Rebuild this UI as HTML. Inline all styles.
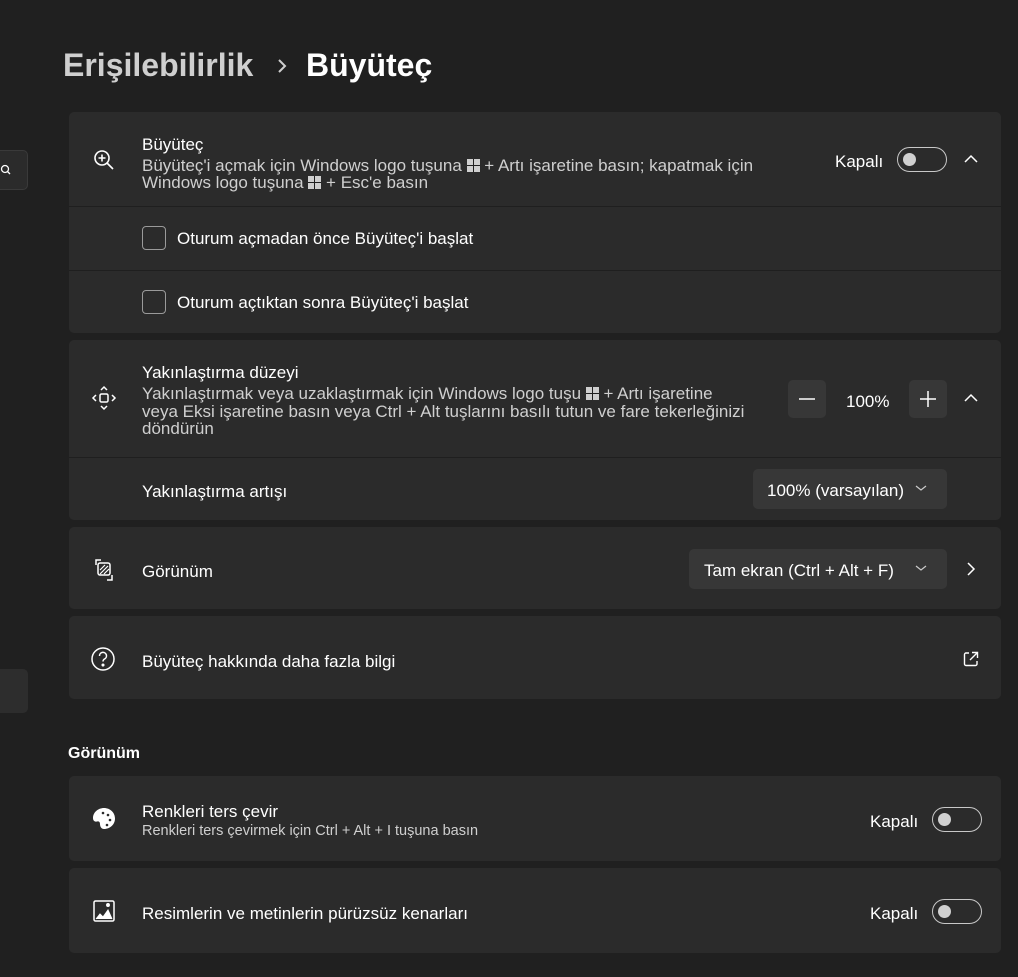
<!DOCTYPE html>
<html><head><meta charset="utf-8"><style>
*{margin:0;padding:0;box-sizing:border-box}
body{width:1018px;height:977px;background:#202020;font-family:"Liberation Sans",sans-serif;color:#fff;position:relative;overflow:hidden}
.a{position:absolute}
.card{position:absolute;left:69px;width:932px;background:#2b2b2b;border-radius:5px}
.sep{position:absolute;left:69px;width:932px;height:1px;background:#1f1f1f}
.t{position:absolute;font-size:17px;color:#fff;white-space:nowrap}
.d{position:absolute;font-size:17px;color:#cfcfcf;line-height:17px;white-space:nowrap}
.tog{position:absolute;width:50px;height:25px;border:1px solid #c8c8c8;border-radius:13px}
.tog:after{content:"";position:absolute;left:5px;top:5px;width:13px;height:13px;border-radius:50%;background:#d0d0d0}
.cb{position:absolute;width:24px;height:24px;border:1px solid #9a9a9a;border-radius:4px}
.btn{position:absolute;background:#373737;border-radius:5px}
.win{display:inline-block;width:13px;height:13px;vertical-align:-1px;background:
linear-gradient(#202020,#202020) 6px 0/1px 13px no-repeat,linear-gradient(#202020,#202020) 0 6px/13px 1px no-repeat,#cfcfcf}
svg{position:absolute}
</style></head><body>
<div class="a" style="left:-10px;top:150px;width:38px;height:40px;background:#2b2b2b;border:1px solid #3a3a3a;border-radius:5px"></div>
<svg style="left:0;top:163px" width="12" height="14" viewBox="0 0 12 14"><circle cx="5" cy="6" r="3.5" fill="none" stroke="#fff" stroke-width="1.3"/><path d="M7.5 8.5L10 11" stroke="#fff" stroke-width="1.3"/></svg>
<div class="a" style="left:-10px;top:669px;width:38px;height:44px;background:#2d2d2d;border-radius:5px"></div>

<div class="a" style="left:63px;top:47px;font-size:32px;font-weight:bold;color:#cfcfcf">Erişilebilirlik</div>
<svg style="left:276px;top:58px" width="12" height="16"><path d="M3 2l6 6-6 6" stroke="#cfcfcf" stroke-width="2" fill="none"/></svg>
<div class="a" style="left:306px;top:47px;font-size:32px;font-weight:bold">Büyüteç</div>

<div class="card" style="top:112px;height:221px"></div>
<div class="sep" style="top:206px"></div>
<div class="sep" style="top:270px"></div>
<svg style="left:92px;top:148px" width="24" height="24" viewBox="0 0 24 24" fill="none" stroke="#fff" stroke-width="1.6"><circle cx="10" cy="10" r="7"/><path d="M15 15l6 6M10 6.5v7M6.5 10h7"/></svg>
<div class="t" style="left:142px;top:135px">Büyüteç</div>
<div class="d" style="left:142px;top:157px">Büyüteç'i açmak için Windows logo tuşuna <span class="win"></span> + Artı işaretine basın; kapatmak için</div>
<div class="d" style="left:142px;top:174px">Windows logo tuşuna <span class="win"></span> + Esc'e basın</div>
<div class="t" style="left:835px;top:152px">Kapalı</div>
<div class="tog" style="left:897px;top:147px"></div>
<svg style="left:963px;top:153px" width="16" height="12"><path d="M2 9l6-6 6 6" stroke="#fff" stroke-width="1.5" fill="none"/></svg>
<div class="cb" style="left:142px;top:226px"></div>
<div class="t" style="left:177px;top:229px">Oturum açmadan önce Büyüteç'i başlat</div>
<div class="cb" style="left:142px;top:290px"></div>
<div class="t" style="left:177px;top:293px">Oturum açtıktan sonra Büyüteç'i başlat</div>

<div class="card" style="top:340px;height:180px"></div>
<div class="sep" style="top:457px"></div>
<svg style="left:91px;top:385px" width="26" height="26" viewBox="0 0 26 26" fill="none" stroke="#fff" stroke-width="1.5"><rect x="9" y="9" width="8" height="8" rx="1.5"/><path d="M10 5l3-3 3 3M10 21l3 3 3-3M5 10l-3 3 3 3M21 10l3 3-3 3"/></svg>
<div class="t" style="left:142px;top:363px">Yakınlaştırma düzeyi</div>
<div class="d" style="left:142px;top:385px">Yakınlaştırmak veya uzaklaştırmak için Windows logo tuşu <span class="win"></span> + Artı işaretine</div>
<div class="d" style="left:142px;top:403px">veya Eksi işaretine basın veya Ctrl + Alt tuşlarını basılı tutun ve fare tekerleğinizi</div>
<div class="d" style="left:142px;top:420px">döndürün</div>
<div class="btn" style="left:788px;top:380px;width:38px;height:38px"></div>
<svg style="left:798px;top:390px" width="18" height="18"><path d="M1 9h16" stroke="#fff" stroke-width="1.5"/></svg>
<div class="t" style="left:846px;top:392px">100%</div>
<div class="btn" style="left:909px;top:380px;width:38px;height:38px"></div>
<svg style="left:919px;top:390px" width="18" height="18"><path d="M1 9h16M9 1v16" stroke="#fff" stroke-width="1.5"/></svg>
<svg style="left:963px;top:392px" width="16" height="12"><path d="M2 9l6-6 6 6" stroke="#fff" stroke-width="1.5" fill="none"/></svg>
<div class="t" style="left:142px;top:482px">Yakınlaştırma artışı</div>
<div class="btn" style="left:753px;top:469px;width:194px;height:40px"></div>
<div class="t" style="left:767px;top:481px">100% (varsayılan)</div>
<svg style="left:915px;top:484px" width="12" height="8"><path d="M1 2l5 4 5-4" stroke="#ccc" stroke-width="1.2" fill="none"/></svg>

<div class="card" style="top:527px;height:82px"></div>
<svg style="left:91px;top:557px" width="26" height="26" viewBox="0 0 26 26" fill="none" stroke="#fff" stroke-width="1.5"><path d="M5 8V3h5M21 18v5h-5"/><rect x="7" y="6" width="12" height="12" rx="2"/><path d="M9 13l5-5M9 17l8-8M13 17l5-5" stroke-width="1.2"/></svg>
<div class="t" style="left:142px;top:562px">Görünüm</div>
<div class="btn" style="left:689px;top:549px;width:258px;height:40px"></div>
<div class="t" style="left:704px;top:561px">Tam ekran (Ctrl + Alt + F)</div>
<svg style="left:915px;top:564px" width="12" height="8"><path d="M1 2l5 4 5-4" stroke="#ccc" stroke-width="1.2" fill="none"/></svg>
<svg style="left:965px;top:561px" width="12" height="16"><path d="M3 2l6 6-6 6" stroke="#fff" stroke-width="1.5" fill="none"/></svg>

<div class="card" style="top:616px;height:83px"></div>
<svg style="left:90px;top:646px" width="26" height="26" viewBox="0 0 26 26" fill="none" stroke="#fff" stroke-width="1.5"><circle cx="13" cy="13" r="11"/><path d="M9.5 10a3.5 3.5 0 1 1 5 3c-1 .6-1.5 1.2-1.5 2.5"/><circle cx="13" cy="19" r=".8" fill="#fff"/></svg>
<div class="t" style="left:142px;top:652px">Büyüteç hakkında daha fazla bilgi</div>
<svg style="left:962px;top:650px" width="18" height="18" viewBox="0 0 18 18" fill="none" stroke="#fff" stroke-width="1.4"><path d="M7 3H4a1.5 1.5 0 0 0-1.5 1.5v9.5A1.5 1.5 0 0 0 4 15.5h9.5A1.5 1.5 0 0 0 15 14v-3M10 2.5h5.5V8M15.5 2.5L8 10"/></svg>

<div class="a" style="left:68px;top:745px;font-size:16px;font-weight:bold">Görünüm</div>

<div class="card" style="top:776px;height:85px"></div>
<svg style="left:91px;top:806px" width="26" height="26" viewBox="0 0 26 26"><path d="M13 2C7 2 2 6.5 2 12c0 3 2 4 4 3.5s3 .5 3 2.5 1 5 4 5c6 0 11-4.5 11-10.5S19 2 13 2z" fill="#fff"/><circle cx="12" cy="7" r="1.3" fill="#2b2b2b"/><circle cx="17" cy="9" r="1.3" fill="#2b2b2b"/><circle cx="19" cy="14" r="1.3" fill="#2b2b2b"/><circle cx="16" cy="19" r="1.3" fill="#2b2b2b"/></svg>
<div class="t" style="left:142px;top:802px">Renkleri ters çevir</div>
<div class="d" style="left:142px;top:823px;font-size:14.5px">Renkleri ters çevirmek için Ctrl + Alt + I tuşuna basın</div>
<div class="t" style="left:870px;top:812px">Kapalı</div>
<div class="tog" style="left:932px;top:807px"></div>

<div class="card" style="top:868px;height:85px"></div>
<svg style="left:92px;top:899px" width="24" height="24" viewBox="0 0 24 24" fill="none" stroke="#fff" stroke-width="1.5"><rect x="2" y="2" width="20" height="20" rx="1.5"/><path d="M4 20l4-5 3 3 5-7 4 9" fill="#fff" stroke-width="1"/><circle cx="16" cy="6" r="1.2" fill="#fff"/></svg>
<div class="t" style="left:142px;top:904px">Resimlerin ve metinlerin pürüzsüz kenarları</div>
<div class="t" style="left:870px;top:904px">Kapalı</div>
<div class="tog" style="left:932px;top:899px"></div>
</body></html>
